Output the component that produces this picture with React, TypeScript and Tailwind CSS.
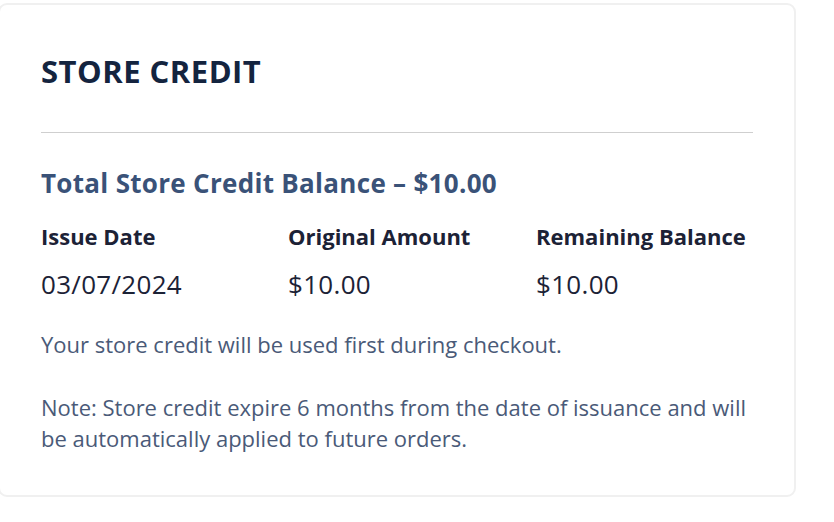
export default function App() {
  return (
    <div className="w-[834px] h-[522px] bg-white pt-[3px] overflow-hidden" style={{ fontFamily: "'Open Sans', 'Noto Sans', sans-serif" }}>
      <div className="-ml-[2px] w-[798px] h-[494px] rounded-[9px] border-2 border-[#f0f0f0] bg-white pl-[41px] pr-[41px]">
        <h1 className="pt-[48px] text-[31px] leading-[36px] font-bold tracking-[0.5px] text-[#14243f]">STORE CREDIT</h1>
        <div className="mt-[43px] h-px bg-[#cfcfcf]"></div>
        <h2 className="mt-[34px] text-[26px] leading-[32px] font-bold tracking-[0.3px] text-[#3a5278]">Total Store Credit Balance – $10.00</h2>
        <div className="mt-[23px] grid grid-cols-[247px_248px_1fr] text-[#1c2236]">
          <div className="text-[22px] leading-[28px] font-bold">Issue Date</div>
          <div className="text-[22px] leading-[28px] font-bold">Original Amount</div>
          <div className="text-[22px] leading-[28px] font-bold">Remaining Balance</div>
          <div className="mt-[18px] text-[26px] leading-[32px] tracking-[0.3px]">03/07/2024</div>
          <div className="mt-[18px] text-[26px] leading-[32px] tracking-[0.3px]">$10.00</div>
          <div className="mt-[18px] text-[26px] leading-[32px] tracking-[0.3px]">$10.00</div>
        </div>
        <p className="mt-[29px] text-[22px] leading-[31px] text-[#4a5a78]">Your store credit will be used first during checkout.</p>
        <p className="mt-[32px] text-[22px] leading-[31px] text-[#4a5a78]">Note: Store credit expire 6 months from the date of issuance and will be automatically applied to future orders.</p>
      </div>
    </div>
  );
}
